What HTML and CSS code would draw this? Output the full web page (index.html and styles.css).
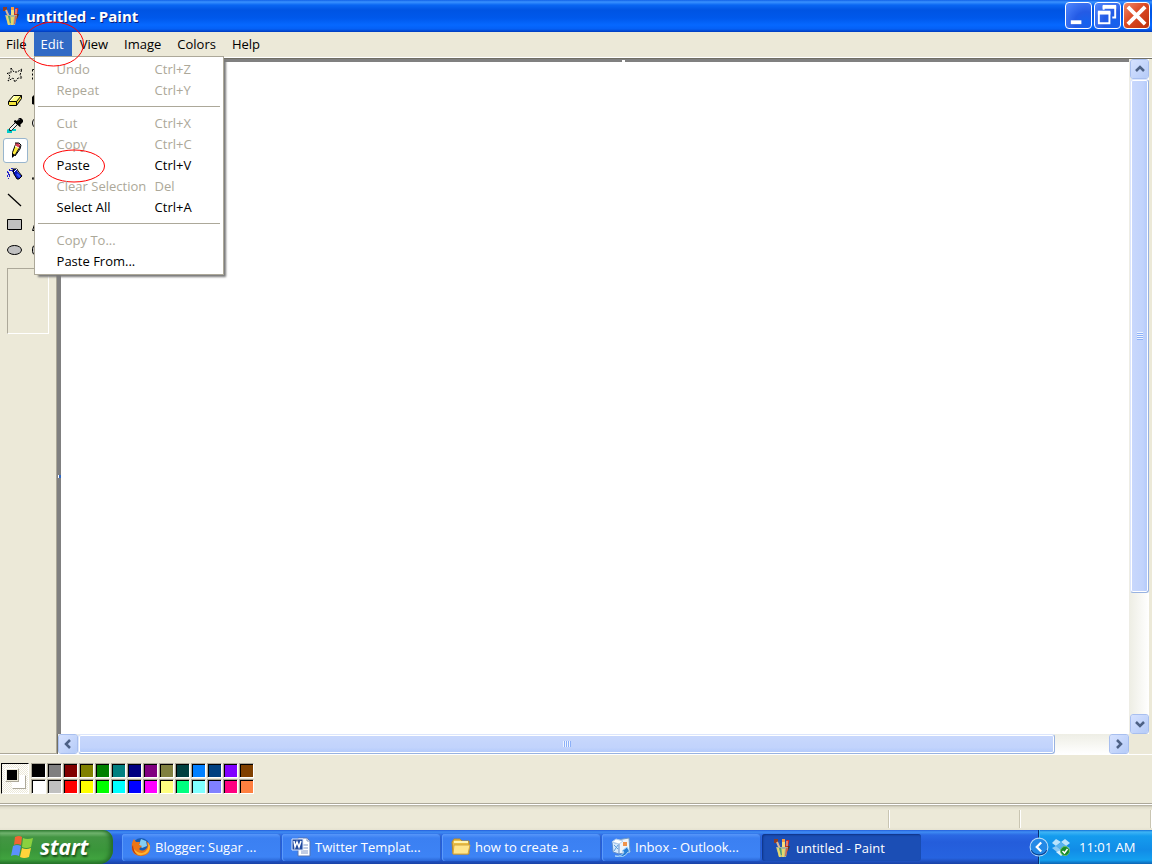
FILE: index.html
```html
<!DOCTYPE html>
<html lang="en">
<head>
<meta charset="utf-8">
<title>untitled - Paint</title>
<link rel="stylesheet" href="styles.css">
</head>
<body>
<svg class="defs" aria-hidden="true">
  <symbol id="paint" viewBox="0 0 16 20">
    <path d="M0 1h4v4H0z" fill="#8c3d25"/><path d="M3 4l3 7" stroke="#d8b79a" stroke-width="2"/>
    <path d="M5 3l3 8" stroke="#315ba5"/><path d="M8 2h3v10H8z" fill="#f4dd80"/><path d="M8 1h3v3H8z" fill="#ff9d3b"/>
    <path d="M14 2l-2 9" stroke="#d42d1e" stroke-width="3"/><path d="M13 3v5" stroke="#ffd2ad"/>
    <path d="M15 8l-2 5" stroke="#63341e" stroke-width="2"/><path d="M2 9h12l-2 10H5z" fill="#a9b49c"/>
    <path d="M3 10h2l2 9H5zM8 11h3l-1 8H8z" fill="#e7d86a"/><path d="M5 10h2l1 7H7z" fill="#4da36b"/><path d="M12 10h2l-2 8h-1z" fill="#d6654a"/>
  </symbol>
</svg>
<header class="titlebar">
  <svg class="title-icon"><use href="#paint"/></svg>
  <h1>untitled - Paint</h1>
  <div class="window-buttons">
    <button class="win" aria-label="Minimize"><svg viewBox="0 0 26 26"><path d="M5 18h11v4H5z" fill="#fff"/></svg></button>
    <button class="win" aria-label="Restore"><svg viewBox="0 0 26 26" fill="none" stroke="#fff"><path d="M9 7V4h12v11h-3" stroke-width="2"/><path d="M8 4h14" stroke-width="4"/><path d="M4 10h11v11H4z" stroke-width="2"/><path d="M3 10h13" stroke-width="4"/></svg></button>
    <button class="win close" aria-label="Close"><svg viewBox="0 0 26 26"><path d="M4 4l18 18M22 4L4 22" stroke="#fff" stroke-width="4"/></svg></button>
  </div>
</header>
<nav class="menubar">
  <button>File</button>
  <div class="menu-holder">
    <button class="open" aria-expanded="true">Edit</button>
    <div class="menu" role="menu">
      <button disabled><span>Undo</span><span>Ctrl+Z</span></button>
      <button disabled><span>Repeat</span><span>Ctrl+Y</span></button>
      <hr>
      <button disabled><span>Cut</span><span>Ctrl+X</span></button>
      <button disabled><span>Copy</span><span>Ctrl+C</span></button>
      <button class="marked"><span>Paste</span><span>Ctrl+V</span><svg class="ring ring-paste" viewBox="0 0 62 34"><ellipse cx="31" cy="17" rx="30.5" ry="16"/></svg></button>
      <button disabled><span>Clear Selection</span><span>Del</span></button>
      <button><span>Select All</span><span>Ctrl+A</span></button>
      <hr>
      <button disabled><span>Copy To...</span></button>
      <button><span>Paste From...</span></button>
    </div>
    <svg class="ring ring-edit" viewBox="0 0 61 46"><ellipse cx="30.5" cy="23" rx="30" ry="22"/></svg>
  </div>
  <button>View</button><button>Image</button><button>Colors</button><button>Help</button>
</nav>
<main class="workspace">
  <aside class="toolbox">
    <div class="tools">
      <button aria-label="Free-form select"><svg viewBox="0 0 16 16"><path d="M4 1l3 4h3l5-3-2 6 2 3h-4l-3 4-2-4-5 3 2-5-3-3h4z" fill="none" stroke="#000" stroke-dasharray="2 1"/></svg></button>
      <button aria-label="Select"><svg viewBox="0 0 16 16"><path d="M.5 2.500h15v10H.5z" fill="none" stroke="#000" stroke-dasharray="2 2"/></svg></button>
      <button aria-label="Eraser"><svg viewBox="0 0 16 16"><path d="M1.500 9.500l5-6h8l-5 6z" fill="#ff8"/><path d="M1.500 9.500h8v4h-7l-1-1zM9.500 9.500l5-6v3l-5 7z" fill="#f3e43c"/><path d="M1.500 9.500l5-6h8v3l-5 7h-7l-1-1zM1.500 9.500h8l5-6M9.500 9.500v4" fill="none" stroke="#000"/><path d="M3 9l5-5" stroke="#fff"/></svg></button>
      <button aria-label="Fill"><svg viewBox="0 0 16 16"><path d="M0 5l3-3v11l-3-1z"/><path d="M3 6l6-5 6 7-7 6z" fill="#ddd" stroke="#000"/></svg></button>
      <button aria-label="Pick color"><svg viewBox="0 0 16 16"><path d="M1 12h8v2H5v2H0v-3z" fill="#0cc"/><path d="M2.500 13.500v-2l6-6 2 2-6 6z" fill="#eee" stroke="#222"/><path d="M7 4l1-1 2 1 2-3h2l2 2v2l-3 3 1 1-1 1-6-5z"/><path d="M11 3l2-1" stroke="#778"/></svg></button>
      <button aria-label="Magnifier"><svg viewBox="0 0 16 16"><circle cx="6" cy="6" r="5.500" fill="#eee" stroke="#000"/><path d="M10 10l5 5" stroke="#000" stroke-width="2"/></svg></button>
      <button class="selected" aria-label="Pencil"><svg viewBox="0 0 16 16"><path d="M5.500 14.500v-4l3-8h2l2 1v2l-4 7z" fill="#ffec3d" stroke="#000"/><path d="M8 1h3l2 2-1 3-3-2z" fill="#d8405c"/><path d="M8 4l4 2" stroke="#fff"/><path d="M5 11l3 2-3 3z"/><path d="M8 1h4l2 2-1 4-5 7" fill="none" stroke="#000"/></svg></button>
      <button aria-label="Brush"><svg viewBox="0 0 16 16"><path d="M7 1h3v8H7zM5 9h7v5H5z"/></svg></button>
      <button aria-label="Airbrush"><svg viewBox="0 0 16 16"><path d="M0 4h1v2H0zM2 2h1v2H2zM4 1h2v1H4zM1 5h1v3H1zM3 3h3v1H3zM0 8h1v2H0zM2 7h1v3H2zM1 11h1v1H1zM5 4h2v1H5z" fill="#22c"/><path d="M6 2h4v2l5 5-3 3h-2L6 6z" fill="#0a18c0"/><path d="M6 2h4l1 2 4 5-3 3h-2L7 7z" fill="none" stroke="#000"/><path d="M7 5l3-3" stroke="#fff"/><path d="M10 7l3 3" stroke="#35f" stroke-width="2"/></svg></button>
      <button aria-label="Text"><svg viewBox="0 0 16 16"><path d="M0 11h5v1H0zM5 12l4-10 4 10M6 9h6" fill="none" stroke="#000"/></svg></button>
      <button aria-label="Line"><svg viewBox="0 0 16 16"><path d="M1 2l13 12" stroke="#000" stroke-width="1.300"/></svg></button>
      <button aria-label="Curve"><svg viewBox="0 0 16 16"><path d="M3 2c10 4-3 7 11 12" fill="none" stroke="#000"/></svg></button>
      <button aria-label="Rectangle"><svg viewBox="0 0 16 16"><path d="M.5 2.500h14v10H.5z" fill="#c0c0c0" stroke="#000"/></svg></button>
      <button aria-label="Polygon"><svg viewBox="0 0 16 16"><path d="M.5 13.500l3-9h5v4h6v5z" fill="#c0c0c0" stroke="#000"/></svg></button>
      <button aria-label="Ellipse"><svg viewBox="0 0 16 16"><ellipse cx="7.500" cy="8" rx="7" ry="4.500" fill="#c0c0c0" stroke="#000"/></svg></button>
      <button aria-label="Rounded rectangle"><svg viewBox="0 0 16 16"><rect x=".5" y="3.500" width="14" height="9" rx="3" fill="#c0c0c0" stroke="#000"/></svg></button>
    </div>
    <div class="tool-options"></div>
  </aside>
  <section class="view">
    <div class="canvas"><i class="handle top"></i><i class="handle left"></i></div>
    <div class="scroll vertical">
      <button aria-label="Scroll up"><svg viewBox="0 0 16 16"><path d="M4 10l4-4 4 4"/></svg></button>
      <div class="thumb"><i></i></div><div class="rest"></div>
      <button aria-label="Scroll down"><svg viewBox="0 0 16 16"><path d="M4 6l4 4 4-4"/></svg></button>
    </div>
    <div class="scroll horizontal">
      <button aria-label="Scroll left"><svg viewBox="0 0 16 16"><path d="M10 4L6 8l4 4"/></svg></button>
      <div class="thumb"><i></i></div><div class="rest"></div>
      <button aria-label="Scroll right"><svg viewBox="0 0 16 16"><path d="M6 4l4 4-4 4"/></svg></button>
    </div>
  </section>
</main>
<section class="palette" aria-label="Colors">
  <div class="current"><i class="back"></i><i class="front"></i></div>
  <div class="swatches">
    <button aria-label="Black" class="c-black"></button><button aria-label="Gray" class="c-gray"></button><button aria-label="Maroon" class="c-maroon"></button><button aria-label="Olive" class="c-olive"></button><button aria-label="Green" class="c-green"></button><button aria-label="Teal" class="c-teal"></button><button aria-label="Navy" class="c-navy"></button><button aria-label="Purple" class="c-purple"></button><button aria-label="Moss" class="c-moss"></button><button aria-label="Pine" class="c-pine"></button><button aria-label="Azure" class="c-azure"></button><button aria-label="Denim" class="c-denim"></button><button aria-label="Violet" class="c-violet"></button><button aria-label="Brown" class="c-brown"></button>
    <button aria-label="White" class="c-white"></button><button aria-label="Silver" class="c-silver"></button><button aria-label="Red" class="c-red"></button><button aria-label="Yellow" class="c-yellow"></button><button aria-label="Lime" class="c-lime"></button><button aria-label="Cyan" class="c-cyan"></button><button aria-label="Blue" class="c-blue"></button><button aria-label="Magenta" class="c-magenta"></button><button aria-label="Cream" class="c-cream"></button><button aria-label="Mint" class="c-mint"></button><button aria-label="Ice" class="c-ice"></button><button aria-label="Lavender" class="c-lavender"></button><button aria-label="Rose" class="c-rose"></button><button aria-label="Coral" class="c-coral"></button>
  </div>
</section>
<div class="statusbar"><span class="help"></span><span class="position"></span><span class="size"></span></div>
<footer class="taskbar">
  <button class="start">
    <svg viewBox="0 0 24 24"><path d="M5 2q4-2 7 0l-1 8q-4-2-7 0z" fill="#f26433"/><path d="M13 3q4 2 10 0l-2 9q-5 2-9 0z" fill="#8bd13f"/><path d="M3 11q4-2 8 0l-2 10q-4-2-8 0z" fill="#5b91fb"/><path d="M12 13q4 2 9 0l-2 9q-5 2-9 0z" fill="#ffd43b"/></svg>
    <span>start</span>
  </button>
  <div class="tasks">
    <button><svg viewBox="0 0 20 20"><circle cx="10" cy="10" r="9" fill="#175bb2"/><path d="M10 2l5 2 1 5-5 2-3-3z" fill="#83cdf2"/><path d="M3 2l2 3h4l-1 3 3 1-3 3q3 3 7 0 3-3 0-8 5 3 4 8-1 7-9 7T1 12Q0 6 3 2z" fill="#ed7518"/><path d="M17 5q2 9-6 11-5 0-8-4 1 7 8 6 8-1 8-9z" fill="#ffb52f"/><path d="M2 8q0 7 5 10-6-2-6-8z" fill="#b93914"/></svg><span>Blogger: Sugar ...</span></button>
    <button><svg viewBox="0 0 20 20"><path d="M7 1h9l3 3v15H7z" fill="#fff" stroke="#5575b4"/><path d="M16 1v3h3M10 8h7M10 11h7M10 14h7M10 16h7" stroke="#8399c8" fill="none"/><path d="M1 2h11v11H1z" fill="#234b9f" stroke="#dce7fb"/><path d="M3 4l1 6 2-5 2 5 2-6" stroke="#fff" stroke-width="1.500" fill="none"/></svg><span>Twitter Templat...</span></button>
    <button><svg viewBox="0 0 20 20"><path d="M1 5l2-3h6l2 2h7v13H2z" fill="#e8bd45" stroke="#b9892b"/><path d="M3 8h16l-2 9H2z" fill="#ffe68c" stroke="#d6a63b"/><path d="M3 5h14" stroke="#fff4b0" stroke-width="2"/></svg><span>how to create a ...</span></button>
    <button><svg viewBox="0 0 20 20"><path d="M6 3l12-2 1 14-12 2z" fill="#edf3fa" stroke="#7097c0"/><path d="M12 5h4v4h-4z" fill="#ef934b"/><path d="M1 5l7 2v10l-6-2z" fill="#d6e9fc" stroke="#5e8dcc"/><path d="M1 5l4-3 7 2-4 3z" fill="#fff" stroke="#b5cfed"/><path d="M3 8l4 4M7 8l-4 6" stroke="#5e9edc"/><path d="M4 19q7 1 9-4l-2-1 5-4 3 5-2 0q-4 7-13 4z" fill="#277fd7" stroke="#a8d5fa"/></svg><span>Inbox - Outlook...</span></button>
    <button class="active"><svg viewBox="0 0 20 20"><use href="#paint" x="3" y="0" width="16" height="20"/></svg><span>untitled - Paint</span></button>
  </div>
  <div class="tray">
    <button class="expand" aria-label="Show hidden icons"><svg viewBox="0 0 18 18"><circle cx="9" cy="9" r="8" fill="#2489e6" stroke="#b7dcf8"/><path d="M2 12a8 8 0 0 0 14 0" fill="none" stroke="#063c91"/><path d="M11 5L7 9l4 4" fill="none" stroke="#fff" stroke-width="2"/></svg></button>
    <svg class="dropbox" viewBox="0 0 20 20"><path d="M5 2l5 3-5 4-4-3zM14 2l5 4-4 3-5-4z" fill="#b9e3fc"/><path d="M5 9l5-4 5 4-5 4z" fill="#58b2ee"/><path d="M1 11l4-2 5 4-4 2zM19 11l-4-2-5 4 4 2z" fill="#8acaf4"/><path d="M5 15l5-2 5 2-5 4z" fill="#d6effd"/><circle cx="14" cy="14" r="4.500" fill="#168b2c" stroke="#69be60"/><path d="M11.500 14l2 2 3-4" fill="none" stroke="#fff" stroke-width="1.500"/></svg>
    <time>11:01 AM</time>
  </div>
</footer>
</body>
</html>
```
FILE: styles.css
```css
* { box-sizing: border-box; }
body { margin: 0; height: 100vh; display: flex; flex-direction: column; overflow: hidden; background: #ece9d8; color: #000; font: 13px/20px "Open Sans", "Noto Sans", sans-serif; }
button { margin: 0; padding: 0; border: 0; background: none; color: inherit; font: inherit; }
svg { display: block; flex: none; }
.defs { position: absolute; width: 0; height: 0; }

.titlebar { flex: none; height: 32px; display: flex; align-items: center; gap: 7px; padding: 0 3px; background: linear-gradient(#1161e8 0, #3a92ff 2px, #0a67f3 5px, #0054e3 10px, #0058eb 18px, #0668ff 25px, #0560f5 29px, #003bbd 32px); }
.title-icon { width: 16px; height: 20px; }
h1 { flex: 1; margin: 0; color: #fff; font: bold 15px/20px "Open Sans", sans-serif; text-shadow: 1px 1px #0a1f80; }
.window-buttons { display: flex; gap: 2px; margin-right: -1px; padding-bottom: 2px; }
.win { width: 27px; height: 27px; border: 1px solid #fff; border-radius: 4px; background: radial-gradient(circle at 80% 80%, #1462ee, #245be5 40%, #5289ff 100%); }
.win.close { background: linear-gradient(135deg, #f0886a, #dc4a25 45%, #bd310c); }
.win svg { width: 25px; height: 25px; }

.menubar { flex: none; height: 25px; display: flex; position: relative; z-index: 2; }
.menubar > button, .open { height: 24px; padding: 0 8px; }
.menubar > button:first-child { padding: 0 7px 0 6px; }
.menu-holder { position: relative; }
.menubar .open { background: #316ac5; color: #fff; padding: 0 8px 0 7px; }
.menu { position: absolute; left: 0; top: 24px; width: 190px; padding: 2px; border: 1px solid #aca899; background: #fff; box-shadow: 3px 3px 2px -1px #777; }
.menu button { position: relative; display: grid; grid-template-columns: 98px 1fr; width: 100%; height: 21px; padding-left: 20px; text-align: left; white-space: nowrap; }
.menu button:disabled { color: #aca899; }
.menu hr { margin: 5px 1px 6px; border: 0; height: 1px; background: #aca899; }
.ring { position: absolute; overflow: visible; fill: none; stroke: #f00; pointer-events: none; }
.ring-edit { left: -11px; top: -11px; width: 61px; height: 46px; }
.ring-paste { left: 6px; top: -6px; width: 62px; height: 34px; }

.workspace { flex: 1; min-height: 0; display: flex; border-top: 1px solid #fff; border-bottom: 1px solid #fff; }
.toolbox { width: 57px; padding: 4px 3px; border-top: 1px solid #aca899; border-right: 1px solid #aca899; border-bottom: 1px solid #aca899; }
.tools { display: grid; grid-template-columns: 25px 25px; grid-auto-rows: 25px; }
.tools button { display: flex; padding: 3px; border: 1px solid transparent; border-radius: 3px; }
.tools svg { width: 16px; height: 16px; }
.tools .selected { background: #fff; border-color: #98b5cd; }
.tool-options { width: 42px; height: 66px; margin: 5px 4px; border: 1px solid; border-color: #aca899 #fff #fff #aca899; }
.view { flex: 1; min-width: 0; display: grid; grid-template: minmax(0, 1fr) 20px / minmax(0, 1fr) 20px; padding-right: 3px; border-top: 1px solid #716f64; }
.canvas { position: relative; background: #fff; border: solid #808080; border-width: 3px 0 0 4px; }
.handle { position: absolute; width: 3px; height: 3px; }
.handle.top { left: 561px; left: calc(53% - 5px); top: -2px; height: 2px; background: #fff; }
.handle.left { left: -3px; top: calc(61% + 3px); background: #316ac5; border: solid #fff; border-width: 0 0 0 1px; }
.scroll { display: flex; background: linear-gradient(90deg, #eeeee5, #fff); }
.vertical { flex-direction: column; border-left: 1px solid #eeede5; }
.horizontal { background: linear-gradient(#eeeee5, #fff); border-left: 1px solid #716f64; }
.scroll button { flex: 0 0 20px; display: grid; place-items: center; border: 1px solid #fff; outline: 1px solid #a8bfef; outline-offset: -1px; border-radius: 3px; background: linear-gradient(135deg, #d6e2ff, #b5cbf8); }
.scroll button svg { width: 16px; height: 16px; fill: none; stroke: #4d6185; stroke-width: 2.500; }
.thumb { display: grid; place-items: center; border: 1px solid; border-color: #dce6fc #98b2e0 #98b2e0 #dce6fc; border-radius: 3px; box-shadow: inset 0 0 0 1px #fff; background: linear-gradient(90deg, #c9d8fc, #c1d3fc 70%, #b2c9fa); }
.horizontal .thumb { flex: 976 1 0; background: linear-gradient(#c9d8fc, #c1d3fc 70%, #b2c9fa); }
.horizontal .rest { flex: 54 1 0; }
.vertical .thumb { flex: 511 1 0; }
.vertical .rest { flex: 121 1 0; }
.thumb i { width: 8px; height: 8px; background: repeating-linear-gradient(#eef4fe 0 1px, #8cb0f8 1px 2px); }
.vertical .thumb i { width: 6px; }
.horizontal .thumb i { height: 6px; background: repeating-linear-gradient(90deg, #eef4fe 0 1px, #8cb0f8 1px 2px); }

.palette { flex: none; height: 49px; display: flex; gap: 2px; padding: 8px 1px; border-bottom: 1px solid #aca899; }
.current { position: relative; width: 28px; height: 31px; border: 1px solid; border-color: #000 #fff #fff #000; background: repeating-conic-gradient(#fff 0 25%, #ece9d8 0 50%) 0 0 / 2px 2px; }
.current i { position: absolute; width: 14px; height: 14px; border: 1px solid; border-color: #fff #aca899 #aca899 #fff; background: #fff; }
.back { left: 10px; top: 11px; }
.current .front { left: 3px; top: 4px; background: #000; box-shadow: inset 0 0 0 1px #ece9d8; }
.swatches { display: grid; grid-template-columns: repeat(14, 15px); grid-auto-rows: 15px; gap: 1px; }
.swatches button { border: 1px solid; border-color: #aca899 #fff #fff #aca899; box-shadow: inset 1px 1px #000; }
.c-black { background: #000; } .c-gray { background: #808080; } .c-maroon { background: #800000; } .c-olive { background: #808000; }
.c-green { background: #008000; } .c-teal { background: #008080; } .c-navy { background: #000080; } .c-purple { background: #800080; }
.c-moss { background: #808040; } .c-pine { background: #004040; } .c-azure { background: #0080ff; } .c-denim { background: #004080; }
.c-violet { background: #8000ff; } .c-brown { background: #804000; } .c-white { background: #fff; } .c-silver { background: #c0c0c0; }
.c-red { background: #f00; } .c-yellow { background: #ff0; } .c-lime { background: #0f0; } .c-cyan { background: #0ff; }
.c-blue { background: #00f; } .c-magenta { background: #f0f; } .c-cream { background: #ffff80; } .c-mint { background: #00ff80; }
.c-ice { background: #80ffff; } .c-lavender { background: #8080ff; } .c-rose { background: #ff0080; } .c-coral { background: #ff8040; }

.statusbar { flex: none; height: 26px; display: flex; padding: 5px 0 2px; border-top: 1px solid #fff; background: linear-gradient(#aca899 0, #dedbca 2px, #ece9d8 5px, #ece9d8 22px, #e2dfcf 26px); }
.statusbar span { border-right: 1px solid #fff; box-shadow: inset -1px 0 #c9c5b2; }
.help { flex: 1; }
.position, .size { width: 131px; }

.taskbar { flex: none; height: 34px; display: flex; color: #fff; background: linear-gradient(#245edb 0, #3f8cf3 2px, #2b69e4 5px, #245ddb 12px, #2663e0 28px, #1941a5 34px); }
.start { width: 113px; display: flex; align-items: center; gap: 6px; padding: 0 0 0 10px; border-radius: 0 10px 14px 0; background: linear-gradient(#3f8c3f 0, #75b873 3px, #439543 7px, #3a963a 20px, #40a33f 29px, #27782a 34px); box-shadow: inset -3px 0 4px #256d28; font: italic bold 21px/30px "Open Sans", sans-serif; text-shadow: 1px 2px 2px #174a18; }
.start svg { width: 24px; height: 24px; }
.tasks { flex: 1; min-width: 0; display: flex; gap: 1px; padding: 4px 0 3px 9px; }
.tasks button { flex: 0 1 159px; min-width: 0; display: flex; align-items: center; gap: 4px; padding: 0 9px 2px; border-radius: 3px; background: linear-gradient(#5796fa, #3b80f2 4px, #3d83f5 23px, #2a67d7); box-shadow: inset 1px 0 #5c9bfa, inset -1px 0 #2d62ca; white-space: nowrap; }
.tasks svg { width: 20px; height: 20px; }
.tasks .active { background: #1b4eb5; box-shadow: inset 1px 1px 2px #0e3282; gap: 5px; padding-bottom: 0; }
.tray { flex: 0 0 114px; display: flex; align-items: center; gap: 2px; border-left: 1px solid #092e72; box-shadow: inset 1px 0 #37b9f4; background: linear-gradient(#1470d5 0, #3eb5f6 2px, #159cee 6px, #118ce7 20px, #14a0ef 30px, #0d63b3 34px); }
.expand { margin-left: -10px; }
.expand svg { width: 20px; height: 20px; }
.tray time { margin-left: 6px; }
.dropbox { width: 20px; height: 20px; }
```
